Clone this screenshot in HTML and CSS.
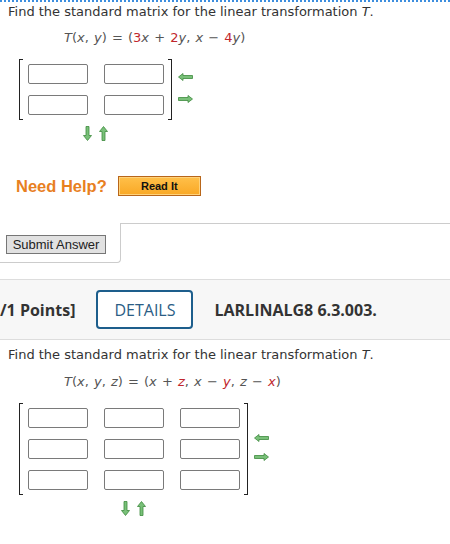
FILE: index.html
```html
<!DOCTYPE html>
<html lang="en">
<head>
    <meta charset="UTF-8">
    <title>Linear transformation</title>
    <link rel="stylesheet" href="styles.css">
</head>
<body>
    <div class="question first">
        <p class="prompt">Find the standard matrix for the linear transformation <i>T</i>.</p>
        <p class="formula"><i>T</i>(<i>x</i>, <i>y</i>) = (<span class="red">3</span><i>x</i> + <span class="red">2</span><i>y</i>, <i>x</i> &minus; <span class="red">4</span><i>y</i>)</p>

        <div class="matrix-wrap">
            <div class="matrix-row">
                <div class="bracket left"></div>
                <div class="cells cols-2">
                    <span class="cell"></span><span class="cell"></span>
                    <span class="cell"></span><span class="cell"></span>
                </div>
                <div class="bracket right"></div>
                <div class="side-arrows">
                    <svg width="15" height="8" viewBox="0 0 15 8"><polygon class="arrow" points="0.5,4 5,0.5 5,2.5 14.5,2.5 14.5,5.5 5,5.5 5,7.5"/></svg>
                    <svg width="15" height="8" viewBox="0 0 15 8"><polygon class="arrow" points="14.5,4 10,0.5 10,2.5 0.5,2.5 0.5,5.5 10,5.5 10,7.5"/></svg>
                </div>
            </div>
            <div class="row-arrows">
                <svg width="9" height="15" viewBox="0 0 9 15"><polygon class="arrow" points="3,0.5 6,0.5 6,9.5 8.5,9.5 4.5,14.5 0.5,9.5 3,9.5"/></svg>
                <svg width="9" height="15" viewBox="0 0 9 15"><polygon class="arrow" points="3,14.5 6,14.5 6,5.5 8.5,5.5 4.5,0.5 0.5,5.5 3,5.5"/></svg>
            </div>
        </div>

        <div class="help">
            <span class="help-label">Need Help?</span>
            <button class="read-it">Read It</button>
        </div>
    </div>

    <div class="submit-row">
        <div class="submit-tab"><button class="submit">Submit Answer</button></div>
        <div class="submit-rest"></div>
    </div>

    <div class="header-band">
        <span class="points">/1 Points]</span>
        <button class="details">DETAILS</button>
        <span class="code">LARLINALG8 6.3.003.</span>
    </div>

    <div class="question second">
        <p class="prompt">Find the standard matrix for the linear transformation <i>T</i>.</p>
        <p class="formula"><i>T</i>(<i>x</i>, <i>y</i>, <i>z</i>) = (<i>x</i> + <i class="red">z</i>, <i>x</i> &minus; <i class="red">y</i>, <i>z</i> &minus; <i class="red">x</i>)</p>

        <div class="matrix-wrap">
            <div class="matrix-row">
                <div class="bracket left"></div>
                <div class="cells cols-3">
                    <span class="cell"></span><span class="cell"></span><span class="cell"></span>
                    <span class="cell"></span><span class="cell"></span><span class="cell"></span>
                    <span class="cell"></span><span class="cell"></span><span class="cell"></span>
                </div>
                <div class="bracket right"></div>
                <div class="side-arrows">
                    <svg width="15" height="8" viewBox="0 0 15 8"><polygon class="arrow" points="0.5,4 5,0.5 5,2.5 14.5,2.5 14.5,5.5 5,5.5 5,7.5"/></svg>
                    <svg width="15" height="8" viewBox="0 0 15 8"><polygon class="arrow" points="14.5,4 10,0.5 10,2.5 0.5,2.5 0.5,5.5 10,5.5 10,7.5"/></svg>
                </div>
            </div>
            <div class="row-arrows">
                <svg width="9" height="15" viewBox="0 0 9 15"><polygon class="arrow" points="3,0.5 6,0.5 6,9.5 8.5,9.5 4.5,14.5 0.5,9.5 3,9.5"/></svg>
                <svg width="9" height="15" viewBox="0 0 9 15"><polygon class="arrow" points="3,14.5 6,14.5 6,5.5 8.5,5.5 4.5,0.5 0.5,5.5 3,5.5"/></svg>
            </div>
        </div>
    </div>
</body>
</html>
```

FILE: styles.css
```css
body {
    margin: 0;
    background: #fff;
    font-family: "DejaVu Sans", Verdana, sans-serif;
    color: #333;
    overflow: hidden;
}

.question {
    padding: 0 8px;
}

.question.first {
    border-top: 2px dotted #3d8ede;
}

.prompt {
    margin: 0;
    padding-top: 2px;
    font-size: 13px;
    line-height: 16px;
    color: #333;
}

.formula {
    margin: 10px 0 0 56px;
    font-size: 13px;
    line-height: 16px;
    color: #555;
    word-spacing: 1px;
}

.red {
    color: #c1272d;
}

.second .prompt {
    margin-top: 7px;
    padding-top: 0;
}

.second .formula {
    margin-top: 11px;
}

/* matriz */
.matrix-wrap {
    display: inline-flex;
    flex-direction: column;
    margin: 13px 0 0 11px;
}

.second .matrix-wrap {
    margin-top: 13px;
}

.matrix-row {
    display: flex;
    align-items: stretch;
    position: relative;
}

.bracket {
    width: 3px;
    border: 1.5px solid #222;
}

.bracket.left {
    border-right: none;
}

.bracket.right {
    border-left: none;
}

.cells {
    display: grid;
    gap: 11px 16px;
    padding: 5px 4px 5px 5px;
}

.cols-2 {
    grid-template-columns: repeat(2, 60px);
}

.cols-3 {
    grid-template-columns: repeat(3, 60px);
}

.cell {
    display: block;
    height: 20px;
    box-sizing: border-box;
    border: 1px solid #7a7a7a;
    border-radius: 2px;
    background: #fff;
}

.side-arrows {
    display: flex;
    flex-direction: column;
    justify-content: center;
    gap: 14px;
    padding: 0 0 4px 6px;
    position: absolute;
    left: 100%;
    top: 0;
    bottom: 0;
}

.second .side-arrows {
    gap: 11px;
}

.row-arrows {
    display: flex;
    justify-content: center;
    gap: 7px;
    margin-top: 6px;
}

.side-arrows svg,
.row-arrows svg {
    display: block;
}

.arrow {
    fill: #79c079;
    stroke: #3d8a3d;
    stroke-width: 0.8;
}

/* ajuda */
.help {
    display: flex;
    align-items: center;
    gap: 11px;
    margin-top: 35px;
    padding-left: 8px;
}

.help-label {
    font-family: "Liberation Sans", Arial, sans-serif;
    font-weight: bold;
    font-size: 16.5px;
    color: #e8801f;
}

.read-it {
    width: 83px;
    height: 20px;
    padding: 0;
    font-family: "Liberation Sans", Arial, sans-serif;
    font-weight: bold;
    font-size: 11px;
    color: #111;
    background: linear-gradient(#ffc04a, #f9a825);
    border: 1px solid #b8661a;
    box-shadow: inset 0 0 0 1px #ffd27a;
}

/* enviar */
.submit-row {
    display: flex;
    margin-top: 27px;
}

.submit-tab {
    width: 121px;
    height: 40px;
    border-right: 1px solid #ccc;
    border-bottom: 1px solid #ccc;
    border-bottom-right-radius: 4px;
    padding: 11px 0 0 6px;
    box-sizing: border-box;
}

.submit-rest {
    flex: 1;
    border-top: 1px solid #ccc;
    margin-left: -1px;
}

.submit {
    height: 19px;
    width: 100px;
    padding: 0;
    font-family: "Liberation Sans", Arial, sans-serif;
    font-size: 13px;
    color: #222;
    background: #e1e1e1;
    border: 1px solid #767676;
}

/* cabecalho */
.header-band {
    display: flex;
    align-items: center;
    margin-top: 16px;
    padding: 10px 0;
    background: #f7f7f7;
    border-top: 1px solid #ddd;
    border-bottom: 1px solid #ddd;
    font-family: "Open Sans", sans-serif;
    font-size: 16px;
    color: #333;
}

.points {
    font-weight: bold;
}

.details {
    width: 97px;
    height: 39px;
    margin: 0 21px 0 21px;
    font-family: "Open Sans", sans-serif;
    font-size: 16px;
    color: #2b5d85;
    background: #fff;
    border: 2px solid #1d5e8c;
    border-radius: 4px;
}

.code {
    font-weight: bold;
}
```
